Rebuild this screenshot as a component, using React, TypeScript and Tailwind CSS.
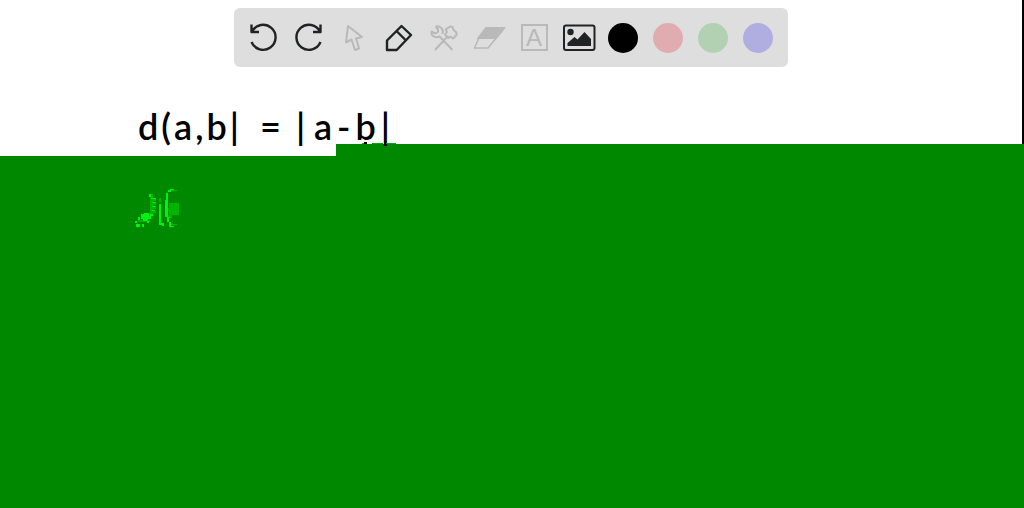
import type { ReactNode } from "react";

type ToolProps = { label: string; muted?: boolean; children: ReactNode };

function Tool({ label, muted, children }: ToolProps) {
  return (
    <button
      type="button"
      aria-label={label}
      className={`flex h-9 w-9 items-center justify-center ${muted ? "text-[#b9b9b9]" : "text-[#202324]"}`}
    >
      {children}
    </button>
  );
}

const iconProps = {
  width: 36,
  height: 36,
  viewBox: "0 0 36 36",
  fill: "none",
  stroke: "currentColor",
  strokeWidth: 2.4,
  strokeLinejoin: "round",
  "aria-hidden": true,
} as const;

const swatches = [
  { name: "Black", color: "bg-black" },
  { name: "Red", color: "bg-[#e0acb0]" },
  { name: "Green", color: "bg-[#b2d1b3]" },
  { name: "Blue", color: "bg-[#b0aee0]" },
];

function Toolbar() {
  return (
    <div
      role="toolbar"
      aria-label="Drawing tools"
      className="flex h-[59px] items-center gap-[9px] rounded-md bg-[#dedede] pl-3 pr-[15px]"
    >
      <Tool label="Undo">
        <svg {...iconProps}>
          <path d="M5.500 4.500V12H13M6 11.500A12.500 12.500 0 1 1 5.500 22" />
        </svg>
      </Tool>
      <Tool label="Redo">
        <svg {...iconProps}>
          <path d="M29.500 4.500V12H22M29 11.500A12.500 12.500 0 1 0 29.500 22" />
        </svg>
      </Tool>
      <Tool label="Select" muted>
        <svg {...iconProps} strokeWidth={2}>
          <path d="M12 6L10 22.500L15.500 19.500L19 30L23 28.500L20 18.500L26 17Z" />
        </svg>
      </Tool>
      <Tool label="Pen">
        <svg {...iconProps}>
          <path d="M6 30V20.500L20.500 6L30 15L15.700 30ZM15.500 11L25 20.500" />
        </svg>
      </Tool>
      <Tool label="Tools" muted>
        <svg {...iconProps} strokeWidth={2}>
          <path d="M9.500 6.500L12 9.500V12L9.500 13.500L5.500 11.500C5 16 9 18.500 13.500 16.500L26.500 30M16.500 14C18 9 14 5.500 9.500 6.500M9 30L21 17M19.500 9.500L24 6.500L26.500 7L27.500 10L30.500 12.500V15L27 18.500L24.500 16.500L22.500 18L19 14.500L21 12Z" />
        </svg>
      </Tool>
      <Tool label="Eraser" muted>
        <svg {...iconProps}>
          <path d="M14.500 7H34.500L25.500 19H5.500Z" fill="currentColor" stroke="none" />
          <path d="M7.500 19L3.500 28H17L33.500 8" strokeWidth={1.6} />
        </svg>
      </Tool>
      <Tool label="Text" muted>
        <span className="flex h-[27px] w-[27px] items-center justify-center border-2 border-current font-['Liberation_Sans',sans-serif] text-2xl leading-none">
          A
        </span>
      </Tool>
      <Tool label="Image">
        <svg {...iconProps} strokeWidth={2}>
          <rect x="3" y="5.500" width="30.500" height="24.500" rx="2" />
          <circle cx="9.500" cy="12" r="3.200" fill="currentColor" stroke="none" />
          <path d="M6.500 26V23L13.500 17L16.500 19.500L23.500 12L30 19V26Z" fill="currentColor" stroke="none" />
        </svg>
      </Tool>
      <div className="ml-0.5 flex gap-[15px]">
        {swatches.map((s) => (
          <button key={s.name} type="button" aria-label={s.name} className={`h-[30px] w-[30px] rounded-full ${s.color}`} />
        ))}
      </div>
    </div>
  );
}

function Formula() {
  return (
    <p className="absolute left-[138px] top-[108px] flex font-['Lato',sans-serif] text-4xl font-semibold leading-none text-black">
      <span className="flex w-[122px] gap-[3px]">
        <span>d</span>
        <span>(</span>
        <span>a</span>
        <span>,</span>
        <span>b</span>
        <span>|</span>
      </span>
      <span className="w-9">=</span>
      <span className="w-[18px]">|</span>
      <span className="flex gap-[5px]">
        <span>a</span>
        <span>-</span>
        <span>b</span>
        <span>|</span>
      </span>
    </p>
  );
}

/* Decoder debris left on the board: dim smear first, bright blocks on top. */
function Debris() {
  return (
    <svg
      className="absolute left-[133px] top-[186px]"
      width="50"
      height="44"
      shapeRendering="crispEdges"
      aria-hidden="true"
    >
      <path
        fill="#00b400"
        d="M17 8h3v22h-3zM20 13h3v2h-3zM20 17h3v2h-3zM20 21h3v2h-3zM20 25h3v2h-3zM36 17h10v12h-10zM35 22h11v3h-11zM38 4h6v1h-6zM38 38h6v1h-6zM5 34h12v2h-12zM26 12h2v4h-2zM35 29h4v3h-4z"
      />
      <path
        fill="#00f010"
        d="M16 8h2v3h-2zM18 12h5v1h-5zM19 16h4v1h-4zM19 20h4v1h-4zM19 24h3v1h-3zM17 28h3v2h-3zM8 28h3v-1h5v3h2v3h-3v2h-5v-2h-2zM5 31h2v3h-2zM2 35h2v2h-2zM3 38h4v3h-4zM9 38h2v3h-2zM14 35h2v2h-2zM26 18h2v19h3v3h-2v-1h-3zM33 7h2v24h-2zM32 14h1v17h-1zM34 31h2v5h-2zM36 36h2v4h3v1h-5zM35 4h3v2h-3zM37 3h4v1h-4z"
      />
    </svg>
  );
}

export default function App() {
  return (
    <main className="relative flex min-h-screen flex-col bg-[#008800]">
      <header className="flex h-36 justify-center border-r-2 border-black bg-white pt-2">
        <Toolbar />
      </header>
      <div className="h-3 w-[336px] bg-white" />
      <Formula />
      <svg
        className="absolute left-[362px] top-[142px]"
        width="36"
        height="4"
        shapeRendering="crispEdges"
        aria-hidden="true"
      >
        <path fill="#000" d="M2 0h3v2h-3z" />
        <path fill="#00a800" d="M0 1h2v1h-2zM10 1h11v1h-11zM24 1h10v1h-10z" />
      </svg>
      <Debris />
    </main>
  );
}
